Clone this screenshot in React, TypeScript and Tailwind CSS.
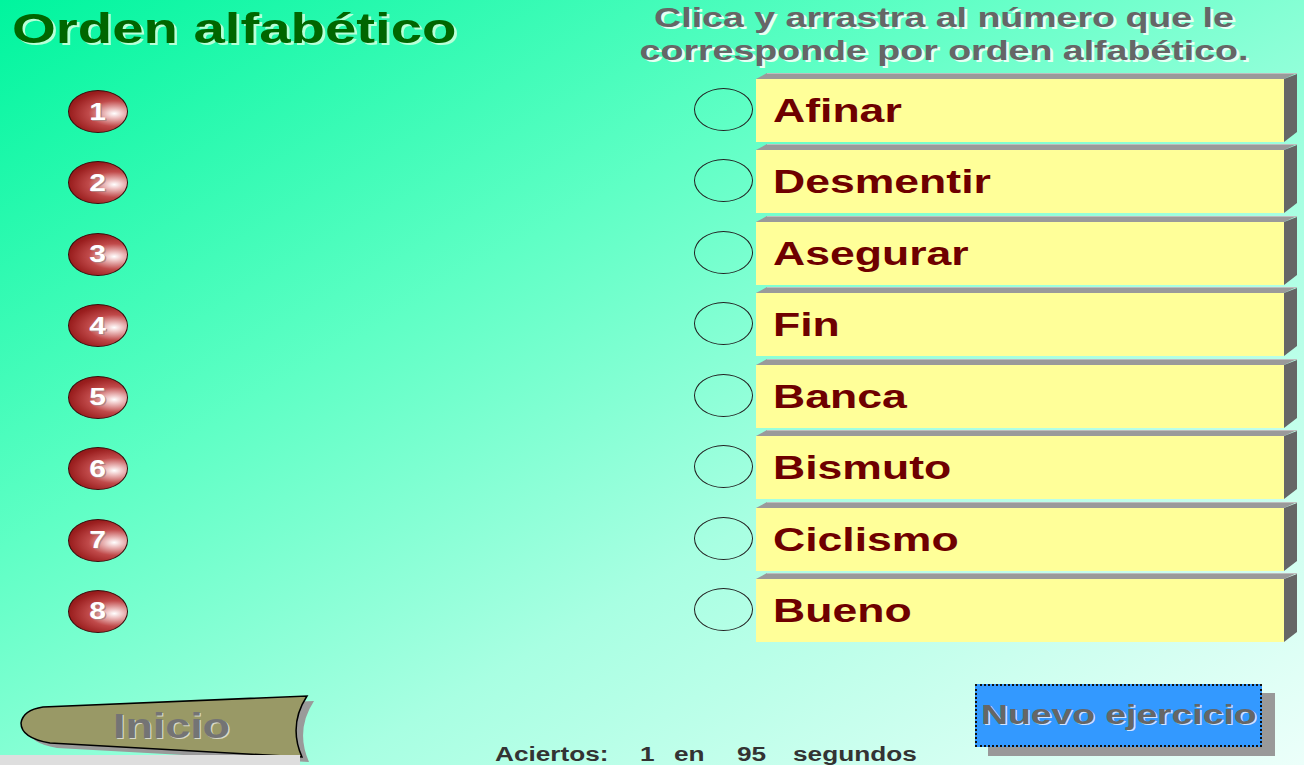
import React from "react";

const words = ["Afinar", "Desmentir", "Asegurar", "Fin", "Banca", "Bismuto", "Ciclismo", "Bueno"];

function Box3D({ word }: { word: string }) {
  return (
    <div className="relative flex h-[69px] w-[541px] shrink-0 flex-col pt-[6px]">
      <svg className="absolute inset-0" width="541" height="69" viewBox="0 0 541 69">
        <polygon points="0,6 11,0 541,0 528,6" fill="#9a9a9a" />
        <line x1="11" y1="0.5" x2="541" y2="0.5" stroke="#bdbdbd" strokeWidth="1" />
        <polygon points="528,6 541,1 541,59 528,69" fill="#666666" />
      </svg>
      <div className="relative flex h-[63px] w-[528px] items-center bg-[#ffff99] pl-[17px]">
        <span className="inline-block origin-left scale-x-[1.35] text-[33px] font-bold leading-none text-[#6e0000]">
          {word}
        </span>
      </div>
    </div>
  );
}

function RedBall({ n }: { n: number }) {
  return (
    <div className="ml-[68px] mt-[17px] flex h-[43px] w-[60px] shrink-0 items-center justify-center rounded-[50%] border border-[#3b0b0b] bg-[radial-gradient(ellipse_at_78%_55%,#ffffff_0%,#f0c8c8_12%,#c04a4a_40%,#9a1e1e_70%,#7a1010_100%)]">
      <span className="inline-block scale-x-[1.25] text-[24px] font-bold leading-none text-white [text-shadow:1px_1px_0_#b08080]">
        {n}
      </span>
    </div>
  );
}

function InicioButton() {
  return (
    <div className="relative ml-[15px] mt-[50px] h-[70px] w-[300px] shrink-0">
      <svg className="absolute inset-0" width="300" height="70" viewBox="0 0 300 70">
        <path d="M13 34 Q15 21 35 18 L299 7 Q280 36 294 68 L42 54 Q13 49 13 34 Z" fill="#9a9a9a" />
        <path d="M6 29 Q8 16 28 13 L292 2 Q273 31 287 63 L35 49 Q6 44 6 29 Z" fill="#999966" stroke="#000" strokeWidth="1.5" />
      </svg>
      <span className="absolute left-[98px] top-[14px] inline-block origin-left scale-x-[1.28] text-[35px] font-bold leading-none text-[#747474] [text-shadow:1px_1px_0_#d8d8c8]">
        Inicio
      </span>
    </div>
  );
}

function Aciertos() {
  const cell = "inline-block origin-left scale-x-[1.31] text-[20px] font-bold leading-none text-[#333333]";
  return (
    <div className="ml-[180px] mt-[100px] flex shrink-0">
      <div className="w-[145px]"><span className={cell}>Aciertos:</span></div>
      <div className="w-[34px]"><span className={cell}>1</span></div>
      <div className="w-[63px]"><span className={cell}>en</span></div>
      <div className="w-[56px]"><span className={cell}>95</span></div>
      <div className="w-[130px]"><span className={cell}>segundos</span></div>
    </div>
  );
}

function NuevoButton() {
  return (
    <div className="ml-[52px] mt-[40px] flex h-[63px] w-[287px] shrink-0 items-center justify-center border-2 border-dotted border-[#111] bg-[#3399ff] shadow-[13px_9px_0_#999999]">
      <span className="inline-block scale-x-[1.38] text-[27px] font-bold leading-none text-[#666666] [text-shadow:1px_1px_0_#d0e4ff]">
        Nuevo ejercicio
      </span>
    </div>
  );
}

export default function App() {
  return (
    <div className="relative h-[765px] w-full overflow-hidden bg-[linear-gradient(to_bottom_right,#00f59e_0%,#5fffc5_36%,#a8ffe2_63%,#ecfffa_100%)] font-['Liberation_Sans',Arial,sans-serif]">
      <header className="flex h-[73px]">
        <div className="w-[704px] shrink-0 pl-[12px] pt-[7px]">
          <h1 className="inline-block origin-left scale-x-[1.31] text-[43px] font-bold leading-none text-[#006600] [text-shadow:2px_2px_0_#b8ffd8]">
            Orden alfabético
          </h1>
        </div>
        <p className="w-[480px] shrink-0 scale-x-[1.34] pt-[1px] text-center text-[28px] font-bold leading-[33px] text-[#666666] [text-shadow:2px_2px_0_#e8fff4]">
          Clica y arrastra al número que le
          <br />
          corresponde por orden alfabético.
        </p>
      </header>

      <main className="flex flex-col">
        {words.map((w, i) => (
          <div key={w} className="flex h-[71.43px] items-start">
            <RedBall n={i + 1} />
            <div className="ml-[566px] mt-[15px] h-[43px] w-[59px] shrink-0 rounded-[50%] border-[1.5px] border-[#222]" />
            <div className="ml-[3px]">
              <Box3D word={w} />
            </div>
          </div>
        ))}
      </main>

      <footer className="flex h-[121px] items-start">
        <InicioButton />
        <Aciertos />
        <NuevoButton />
      </footer>
      <div className="absolute bottom-0 left-0 h-[10px] w-[300px] bg-[#dedede]" />
    </div>
  );
}
